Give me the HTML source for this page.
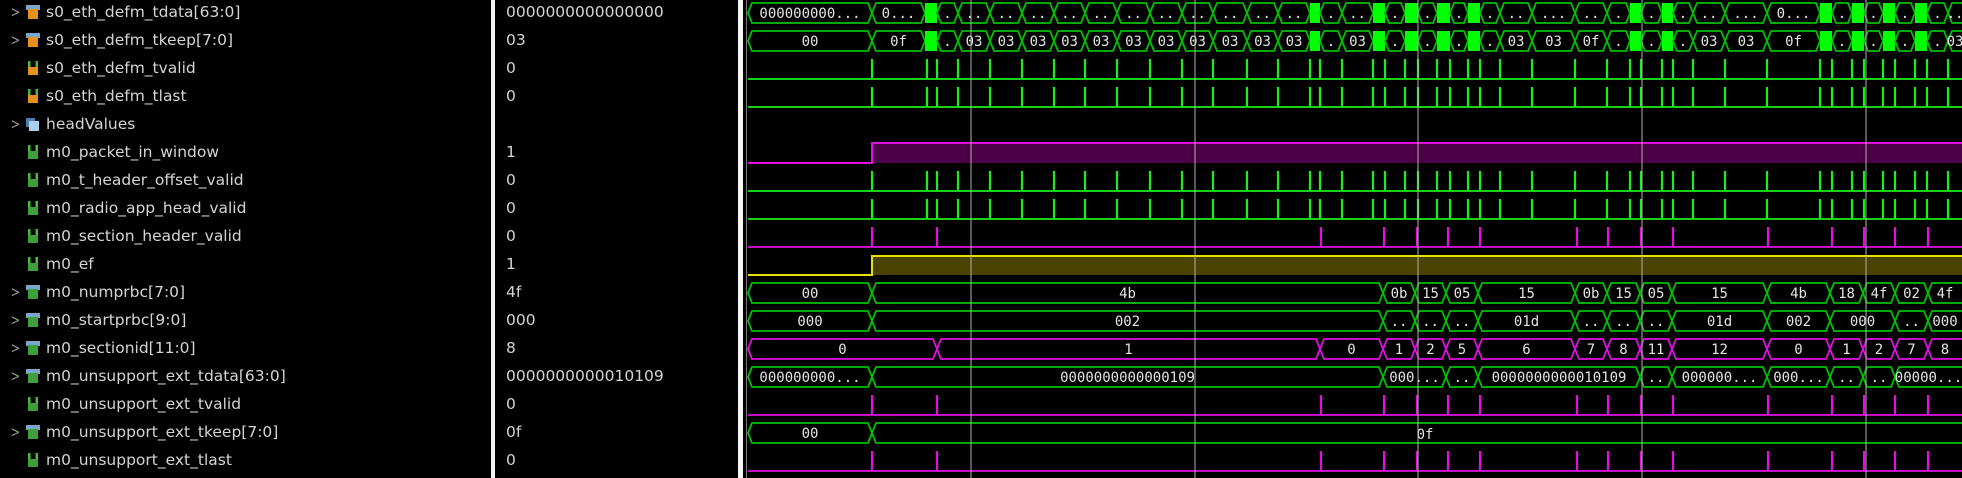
<!DOCTYPE html>
<html><head><meta charset="utf-8">
<style>
html,body{margin:0;padding:0;background:#000;width:1962px;height:478px;overflow:hidden}
#names{position:absolute;left:0;top:0;width:491px;height:478px;background:#000}
.r{position:absolute;left:0;height:28px;width:491px;font-family:"DejaVu Sans","Liberation Sans",sans-serif;font-size:15.5px;color:#d4d4d4;line-height:28px;white-space:nowrap}
.r .t{position:absolute;left:46px;top:-2px}
.r .c{position:absolute;left:9px;top:-2px;color:#9a9a9a;font-size:15px;transform:scaleX(0.75)}
.r svg{position:absolute;left:25px;top:4px}
#vals{position:absolute;left:495px;top:0;width:243px;height:478px}
.v{position:absolute;left:11px;font-family:"DejaVu Sans","Liberation Sans",sans-serif;font-size:15.5px;color:#d4d4d4;line-height:28px;white-space:nowrap}
#b1{position:absolute;left:491px;top:0;width:4px;height:478px;background:#f4f4f4}
#b2{position:absolute;left:738px;top:0;width:5px;height:478px;background:#f4f4f4}
#b3{position:absolute;left:746px;top:0;width:1px;height:478px;background:#777}
#wave{position:absolute;left:0;top:0}
</style></head><body>
<div id="names">
<div class="r" style="top:0"><span class="c">&gt;</span><svg width="16" height="16"><rect x="1" y="1" width="14" height="5" fill="#7aa6c8"/><rect x="3" y="5" width="10" height="10" fill="#e8901c"/></svg><span class="t">s0_eth_defm_tdata[63:0]</span></div>
<div class="r" style="top:28px"><span class="c">&gt;</span><svg width="16" height="16"><rect x="1" y="1" width="14" height="5" fill="#7aa6c8"/><rect x="3" y="5" width="10" height="10" fill="#e8901c"/></svg><span class="t">s0_eth_defm_tkeep[7:0]</span></div>
<div class="r" style="top:56px"><svg width="16" height="16"><rect x="3" y="1" width="2.5" height="8" fill="#4cb848"/><rect x="10.5" y="1" width="2.5" height="8" fill="#4cb848"/><rect x="3" y="7" width="10" height="8" fill="#e8901c"/></svg><span class="t">s0_eth_defm_tvalid</span></div>
<div class="r" style="top:84px"><svg width="16" height="16"><rect x="3" y="1" width="2.5" height="8" fill="#4cb848"/><rect x="10.5" y="1" width="2.5" height="8" fill="#4cb848"/><rect x="3" y="7" width="10" height="8" fill="#e8901c"/></svg><span class="t">s0_eth_defm_tlast</span></div>
<div class="r" style="top:112px"><span class="c">&gt;</span><svg width="16" height="16"><rect x="1" y="2" width="9" height="9" fill="#4e7fb0"/><rect x="4" y="5" width="10" height="10" fill="#a8d0ec"/></svg><span class="t">headValues</span></div>
<div class="r" style="top:140px"><svg width="16" height="16"><rect x="3" y="1" width="2.5" height="8" fill="#4cb848"/><rect x="10.5" y="1" width="2.5" height="8" fill="#4cb848"/><rect x="3" y="7" width="10" height="8" fill="#3ea03a"/></svg><span class="t">m0_packet_in_window</span></div>
<div class="r" style="top:168px"><svg width="16" height="16"><rect x="3" y="1" width="2.5" height="8" fill="#4cb848"/><rect x="10.5" y="1" width="2.5" height="8" fill="#4cb848"/><rect x="3" y="7" width="10" height="8" fill="#3ea03a"/></svg><span class="t">m0_t_header_offset_valid</span></div>
<div class="r" style="top:196px"><svg width="16" height="16"><rect x="3" y="1" width="2.5" height="8" fill="#4cb848"/><rect x="10.5" y="1" width="2.5" height="8" fill="#4cb848"/><rect x="3" y="7" width="10" height="8" fill="#3ea03a"/></svg><span class="t">m0_radio_app_head_valid</span></div>
<div class="r" style="top:224px"><svg width="16" height="16"><rect x="3" y="1" width="2.5" height="8" fill="#4cb848"/><rect x="10.5" y="1" width="2.5" height="8" fill="#4cb848"/><rect x="3" y="7" width="10" height="8" fill="#3ea03a"/></svg><span class="t">m0_section_header_valid</span></div>
<div class="r" style="top:252px"><svg width="16" height="16"><rect x="3" y="1" width="2.5" height="8" fill="#4cb848"/><rect x="10.5" y="1" width="2.5" height="8" fill="#4cb848"/><rect x="3" y="7" width="10" height="8" fill="#3ea03a"/></svg><span class="t">m0_ef</span></div>
<div class="r" style="top:280px"><span class="c">&gt;</span><svg width="16" height="16"><rect x="1" y="1" width="14" height="5" fill="#7aa6c8"/><rect x="3" y="5" width="10" height="10" fill="#3ea03a"/></svg><span class="t">m0_numprbc[7:0]</span></div>
<div class="r" style="top:308px"><span class="c">&gt;</span><svg width="16" height="16"><rect x="1" y="1" width="14" height="5" fill="#7aa6c8"/><rect x="3" y="5" width="10" height="10" fill="#3ea03a"/></svg><span class="t">m0_startprbc[9:0]</span></div>
<div class="r" style="top:336px"><span class="c">&gt;</span><svg width="16" height="16"><rect x="1" y="1" width="14" height="5" fill="#7aa6c8"/><rect x="3" y="5" width="10" height="10" fill="#3ea03a"/></svg><span class="t">m0_sectionid[11:0]</span></div>
<div class="r" style="top:364px"><span class="c">&gt;</span><svg width="16" height="16"><rect x="1" y="1" width="14" height="5" fill="#7aa6c8"/><rect x="3" y="5" width="10" height="10" fill="#3ea03a"/></svg><span class="t">m0_unsupport_ext_tdata[63:0]</span></div>
<div class="r" style="top:392px"><svg width="16" height="16"><rect x="3" y="1" width="2.5" height="8" fill="#4cb848"/><rect x="10.5" y="1" width="2.5" height="8" fill="#4cb848"/><rect x="3" y="7" width="10" height="8" fill="#3ea03a"/></svg><span class="t">m0_unsupport_ext_tvalid</span></div>
<div class="r" style="top:420px"><span class="c">&gt;</span><svg width="16" height="16"><rect x="1" y="1" width="14" height="5" fill="#7aa6c8"/><rect x="3" y="5" width="10" height="10" fill="#3ea03a"/></svg><span class="t">m0_unsupport_ext_tkeep[7:0]</span></div>
<div class="r" style="top:448px"><svg width="16" height="16"><rect x="3" y="1" width="2.5" height="8" fill="#4cb848"/><rect x="10.5" y="1" width="2.5" height="8" fill="#4cb848"/><rect x="3" y="7" width="10" height="8" fill="#3ea03a"/></svg><span class="t">m0_unsupport_ext_tlast</span></div>
</div>
<div id="b1"></div>
<div id="vals">
<div class="v" style="top:-2px">0000000000000000</div>
<div class="v" style="top:26px">03</div>
<div class="v" style="top:54px">0</div>
<div class="v" style="top:82px">0</div>
<div class="v" style="top:138px">1</div>
<div class="v" style="top:166px">0</div>
<div class="v" style="top:194px">0</div>
<div class="v" style="top:222px">0</div>
<div class="v" style="top:250px">1</div>
<div class="v" style="top:278px">4f</div>
<div class="v" style="top:306px">000</div>
<div class="v" style="top:334px">8</div>
<div class="v" style="top:362px">0000000000010109</div>
<div class="v" style="top:390px">0</div>
<div class="v" style="top:418px">0f</div>
<div class="v" style="top:446px">0</div>
</div>
<div id="b2"></div>
<div id="b3"></div>
<svg id="wave" width="1962" height="478" xmlns="http://www.w3.org/2000/svg"></svg>
<script>
const S=document.getElementById('wave');
let html='';
const X0=748,XE=1975;
const GB='#00c000',GP='#18f018',MG='#e010e0';
function bus(row,tr,labels,col,fillcol){
  const top=3+28*row,bot=23+28*row,mid=13+28*row,d=4;
  for(let i=0;i<tr.length-1;i++){
    const a=tr[i],b=tr[i+1],w=b-a;
    if(w<14){html+=`<rect x="${a}" y="${top}" width="${w}" height="${bot-top}" fill="${fillcol||'#00ff00'}"/>`;continue;}
    html+=`<path d="M${a} ${mid}L${a+d} ${top}L${b-d} ${top}L${b} ${mid}L${b-d} ${bot}L${a+d} ${bot}Z" fill="none" stroke="${col}" stroke-width="1.8"/>`;
    let L=labels(i,w);
    if(L){let cx=(a+Math.min(b,1962))/2;
      html+=`<text x="${cx}" y="${mid+5}" text-anchor="middle" font-family="DejaVu Sans Mono,Liberation Mono,monospace" font-size="14" fill="#e4e4e4">${L}</text>`;}
  }
}
function pulses(row,ps,col){
  const top=3+28*row,base=23+28*row;
  html+=`<line x1="${X0}" y1="${base}" x2="1962" y2="${base}" stroke="${col}" stroke-width="1.8"/>`;
  let p='';ps.forEach(x=>{p+=`M${x} ${top}V${base}`;});
  html+=`<path d="${p}" stroke="${col}" stroke-width="2.2"/>`;
}
const P1=[872,927,937,958,990,1022,1054,1085,1117,1150,1182,1213,1247,1278,1310,1320,1342,1373,1385,1405,1418,1437,1450,1468,1480,1500,1532,1575,1607,1630,1641,1662,1673,1693,1725,1767,1820,1832,1852,1864,1883,1895,1915,1927,1948];
const T0=[X0,872,925,937,958].concat(P1.slice(4)).concat([XE]);
bus(0,T0,(i,w)=>{if(i==0)return '000000000...';if(i==1)return '0...';const a=T0[i];if(a==1767)return '0...';if(w<26)return '.';if(w<39)return '..';return '...';},GB);
bus(1,T0,(i,w)=>{if(i==0)return '00';if(i==1)return '0f';const a=T0[i];if(a==1575||a==1767)return '0f';if(w<26)return '.';return '03';},GB);
pulses(2,P1,GP);pulses(3,P1,GP);pulses(6,P1,GP);pulses(7,P1,GP);
const P2=[872,937,1321,1384,1417,1448,1480,1577,1608,1641,1673,1768,1832,1864,1895,1928];
pulses(8,P2,MG);pulses(14,P2,MG);pulses(16,P2,MG);
html+=`<rect x="872" y="143" width="1100" height="20" fill="#4c0048"/><path d="M${X0} 163H872V143H1962" fill="none" stroke="${MG}" stroke-width="2"/>`;
html+=`<rect x="872" y="256" width="1100" height="19" fill="#4a4200"/><path d="M${X0} 275H872V256H1962" fill="none" stroke="#e8e000" stroke-width="2"/>`;
function seg(row,list,col){const tr=list.map(s=>s[0]).concat([XE]);bus(row,tr,(i)=>list[i][1],col);}
seg(10,[[X0,'00'],[872,'4b'],[1383,'0b'],[1415,'15'],[1446,'05'],[1478,'15'],[1575,'0b'],[1607,'15'],[1640,'05'],[1672,'15'],[1767,'4b'],[1830,'18'],[1863,'4f'],[1895,'02'],[1928,'4f']],GB);
seg(11,[[X0,'000'],[872,'002'],[1383,'..'],[1415,'..'],[1446,'..'],[1478,'01d'],[1575,'..'],[1607,'..'],[1640,'..'],[1672,'01d'],[1767,'002'],[1830,'000'],[1895,'..'],[1928,'000']],GB);
seg(12,[[X0,'0'],[937,'1'],[1320,'0'],[1383,'1'],[1415,'2'],[1446,'5'],[1478,'6'],[1575,'7'],[1607,'8'],[1640,'11'],[1672,'12'],[1767,'0'],[1830,'1'],[1863,'2'],[1895,'7'],[1928,'8']],MG);
seg(13,[[X0,'000000000...'],[872,'0000000000000109'],[1383,'000...'],[1446,'..'],[1478,'0000000000010109'],[1640,'..'],[1672,'000000...'],[1767,'000...'],[1830,'..'],[1863,'..'],[1895,'00000...']],GB);
bus(15,[X0,872,XE],(i)=>i==0?'00':'',GB);
html+=`<text x="1425" y="439" text-anchor="middle" font-family="DejaVu Sans Mono,Liberation Mono,monospace" font-size="14" fill="#e4e4e4">0f</text>`;
[971,1195,1418,1642,1866].forEach(x=>{html+=`<line x1="${x}" y1="0" x2="${x}" y2="478" stroke="#b8b8b8" stroke-width="1.2" opacity="0.8"/>`;});
S.innerHTML=html;
</script>
</body></html>
